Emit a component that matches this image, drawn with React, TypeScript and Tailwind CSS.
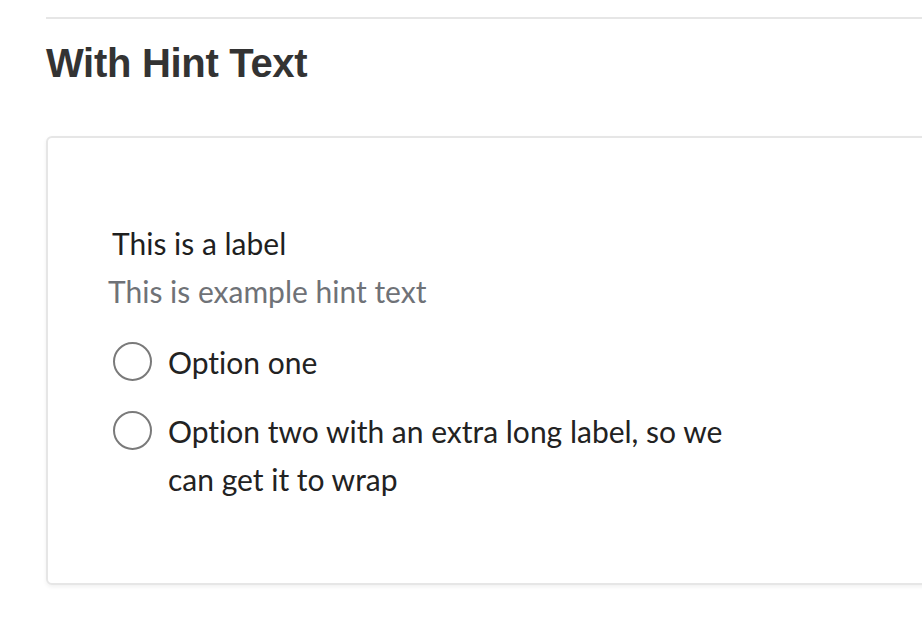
import React from "react";

const options = [
  "Option one",
  "Option two with an extra long label, so we can get it to wrap",
];

function Radio({ label }: { label: string }) {
  return (
    <label className="flex items-start gap-[16px]">
      <span className="mt-[4px] ml-[5px] h-[39px] w-[39px] shrink-0 rounded-full border-2 border-[#7a7a7a] bg-white" />
      <span className="max-w-[575px] text-[30px] leading-[48px] text-[#222]">{label}</span>
    </label>
  );
}

export default function App() {
  return (
    <div className="h-[626px] overflow-hidden bg-white pl-[46px]">
      {/* Divider */}
      <div className="mt-[17px] h-[2px] bg-[#e6e6e6]" />

      <h2
        className="mt-[20px] text-[40px] font-bold leading-[48px] tracking-[-0.3px] text-[#333]"
        style={{ fontFamily: '"Liberation Sans", Arial, sans-serif' }}
      >
        With Hint Text
      </h2>

      {/* Card */}
      <div
        className="mt-[49px] w-[1000px] rounded-[6px] border-2 border-[#e6e6e6] bg-white pt-[81px] pb-[80px] pl-[60px] shadow-[0_2px_4px_rgba(0,0,0,0.06)] [font-variant-ligatures:none]"
        style={{ fontFamily: "Lato, sans-serif" }}
      >
        <div className="ml-[4px] text-[30px] leading-[48px] text-[#1f1f1f]">This is a label</div>
        <div className="text-[30px] leading-[48px] text-[#6f7277]">This is example hint text</div>

        <div className="mt-[23px] flex flex-col gap-[21px]">
          {options.map((o) => (
            <Radio key={o} label={o} />
          ))}
        </div>
      </div>
    </div>
  );
}
